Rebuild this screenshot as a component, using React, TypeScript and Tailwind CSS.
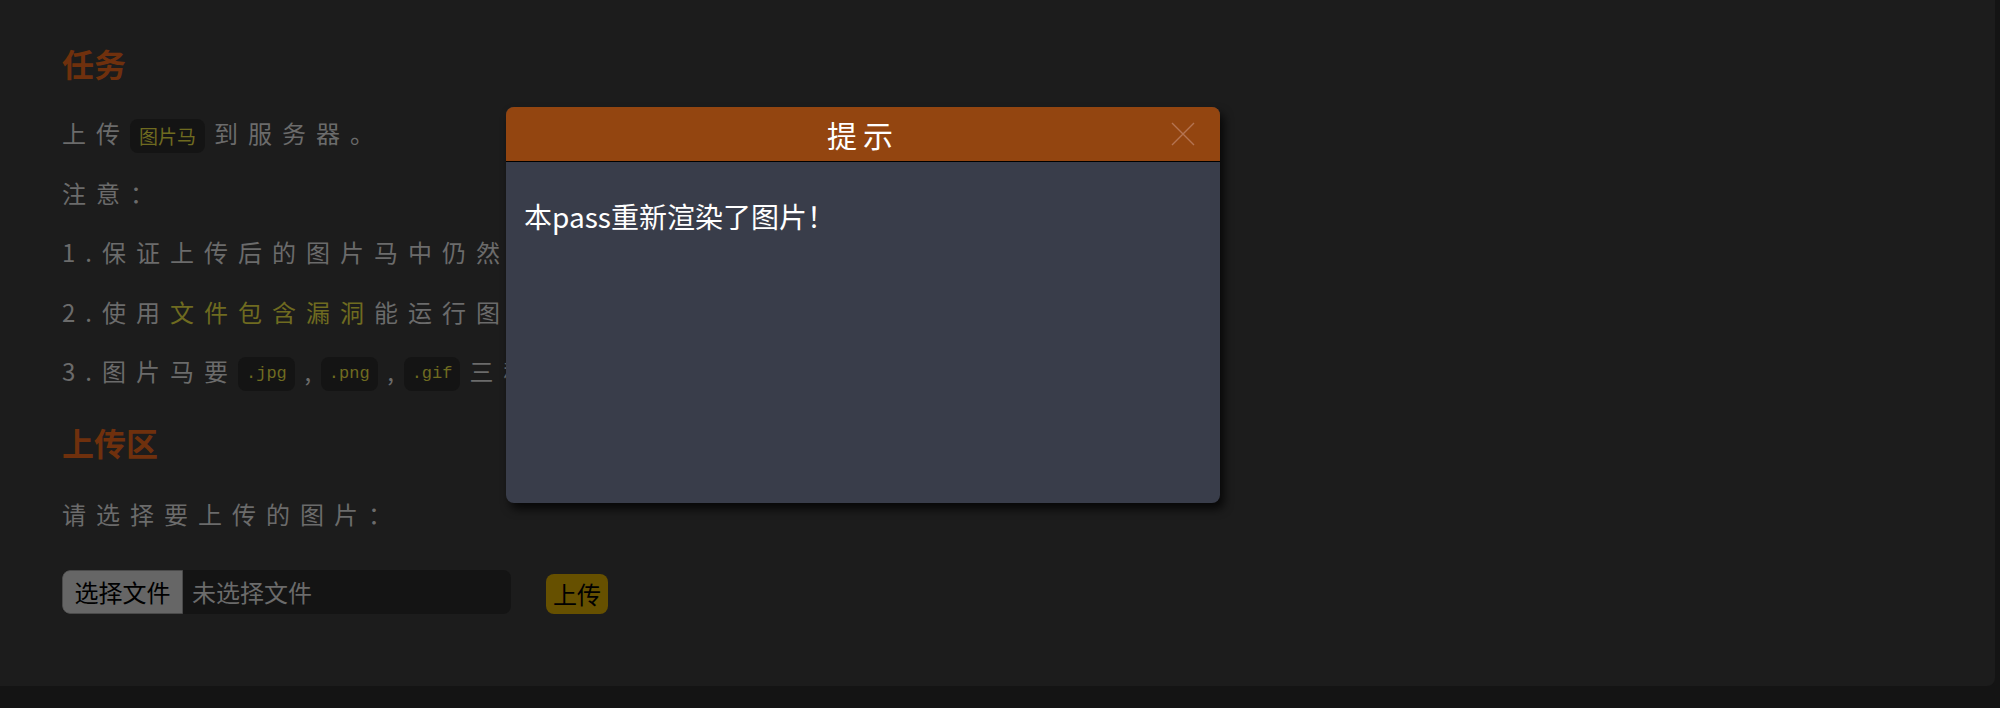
const page = "font-['Noto_Sans_CJK_SC','Noto_Sans',sans-serif]";

function Chip({ children, mono }: { children: React.ReactNode; mono?: boolean }) {
	return (
		<span
			className={
				mono
					? "inline-block h-[34px] rounded-lg bg-[#141414] px-[8px] align-middle font-['Liberation_Mono',monospace] text-[17px] leading-[34px] tracking-normal text-[#6f6b20]"
					: "mr-[9px] inline-block h-[34px] rounded-lg bg-[#141414] px-[9px] align-middle text-[19px] leading-[34px] tracking-normal text-[#6f6b20]"
			}>
			{children}
		</span>
	);
}

function Comma() {
	return <span className="inline-block w-[26px] text-center tracking-normal">,</span>;
}

export default function App() {
	return (
		<div className={`relative h-[708px] w-[2000px] overflow-hidden bg-[#141414] ${page}`}>
			<div className="h-[686px] w-[1995px] rounded-br-lg bg-[#1c1c1c] px-[62px]">
				<h2 className="pt-[43px] text-[32px] leading-[40px] font-bold text-[#6f300d]">任务</h2>
				<div className="mt-[20px] text-[24px] leading-[59.5px] tracking-[10px] text-[#6b6b6b]">
					<p>
						上传<Chip>图片马</Chip>到服务器。
					</p>
					<p>注意：</p>
					<p>1.保证上传后的图片马中仍然包含完整的一句话或webshell代码。</p>
					<p>
						2.使用<span className="text-[#6f6b20]">文件包含漏洞</span>能运行图片马中的恶意代码。
					</p>
					<p>
						3.图片马要<Chip mono>.jpg</Chip>
						<Comma />
						<Chip mono>.png</Chip>
						<Comma />
						<Chip mono>.gif</Chip>
						<span className="ml-[9px]">三种后缀都上传成功才算过关！</span>
					</p>
				</div>
				<h2 className="mt-[21px] text-[32px] leading-[40px] font-bold text-[#6f300d]">上传区</h2>
				<p className="mt-[34px] text-[24px] leading-[36px] tracking-[10px] text-[#6b6b6b]">请选择要上传的图片：</p>
				<div className="mt-[38px] flex items-end gap-[35px]">
					<div className="flex h-[44px] w-[449px] items-center overflow-hidden rounded-lg bg-[#141414] text-[24px]">
						<span className="flex h-full w-[121px] items-center justify-center rounded-l-lg border border-[#4a4a4a] bg-[#666666] text-black">
							选择文件
						</span>
						<span className="ml-[9px] text-[#6b6b6b]">未选择文件</span>
					</div>
					<button className="h-[40px] rounded-lg bg-[#665000] px-[7px] text-[24px] leading-[40px] text-black">上传</button>
				</div>
			</div>

			<div className="absolute top-[107px] left-[506px] flex h-[396px] w-[714px] flex-col overflow-hidden rounded-lg bg-[#393d4a] shadow-[4px_6px_10px_rgba(0,0,0,0.75)]">
				<div className="relative flex h-[55px] shrink-0 items-center justify-center border-b border-black bg-[#934510]">
					<span className="text-[30px] tracking-[6px] text-white">提示</span>
					<svg className="absolute top-[15px] right-[25px]" width="24" height="24" viewBox="0 0 24 24">
						<path d="M1 1L23 23M23 1L1 23" stroke="#b47452" strokeWidth="1.4" fill="none" />
					</svg>
				</div>
				<p className="px-[18px] pt-[36px] text-[28px] leading-[36px] text-white">本pass重新渲染了图片！</p>
			</div>
		</div>
	);
}
